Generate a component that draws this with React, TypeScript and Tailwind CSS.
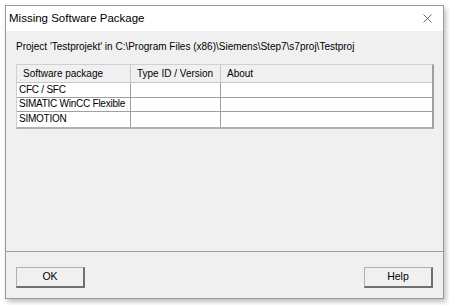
import { X } from 'lucide-react';

const rows = ['CFC / SFC', 'SIMATIC WinCC Flexible', 'SIMOTION'];

export default function App() {
  return (
    <div className="w-[450px] h-[305px] bg-white p-[5px]" style={{ fontFamily: '"Liberation Sans", Arial, sans-serif' }}>
      <div className="w-[439px] h-[294px] border border-[#9a9a9a] bg-[#f0f0f0] shadow-[2px_3px_5px_rgba(0,0,0,0.25)] flex flex-col">
        {/* title bar */}
        <div className="h-[25px] bg-white flex items-center justify-between pl-[3px] pr-[8px]">
          <span className="text-[11.5px] text-black whitespace-nowrap">Missing Software Package</span>
          <X size={15} strokeWidth={1.2} className="text-[#333]" />
        </div>

        <div className="flex-1 flex flex-col px-[10px]">
          <div className="mt-[10px] text-[10px] text-black leading-[12px] whitespace-nowrap">
            Project 'Testprojekt' in C:\Program Files (x86)\Siemens\Step7\s7proj\Testproj
          </div>

          {/* list view */}
          <div className="mt-[11px] w-[418px] border border-[#d0d0d0] border-r-2 border-r-[#a0a0a0] border-b-2 border-b-[#b0b0b0] bg-white text-[10px] text-black whitespace-nowrap">
            <div className="flex h-[18px] bg-[#f0f0f0] border-b border-[#c8c8c8]">
              <div className="w-[114px] pl-[6px] flex items-center border-r border-[#c8c8c8] overflow-hidden">Software package</div>
              <div className="w-[90px] pl-[6px] flex items-center border-r border-[#c8c8c8] overflow-hidden">Type ID / Version</div>
              <div className="flex-1 pl-[6px] flex items-center">About</div>
            </div>
            {rows.map((r, i) => (
              <div key={r} className={`flex h-[14.5px] ${i < rows.length - 1 ? 'border-b border-[#a0a0a0]' : ''}`}>
                <div className="w-[114px] pl-[2px] flex items-center border-r border-[#a0a0a0] leading-none overflow-hidden tracking-[-0.25px]">{r}</div>
                <div className="w-[90px] border-r border-[#a0a0a0]" />
                <div className="flex-1" />
              </div>
            ))}
          </div>

          <div className="flex-1" />
        </div>

        {/* footer */}
        <div className="border-t border-[#a0a0a0] h-[47px] flex items-start justify-between px-[10px] pt-[15px]">
          <button className="w-[69px] h-[21px] bg-[#f0f0f0] border border-[#b0b0b0] border-r-2 border-r-[#707070] border-b-2 border-b-[#707070] text-[10.5px] text-black">
            OK
          </button>
          <button className="w-[69px] h-[21px] bg-[#f0f0f0] border border-[#b0b0b0] border-r-2 border-r-[#707070] border-b-2 border-b-[#707070] text-[10.5px] text-black">
            Help
          </button>
        </div>
      </div>
    </div>
  );
}
